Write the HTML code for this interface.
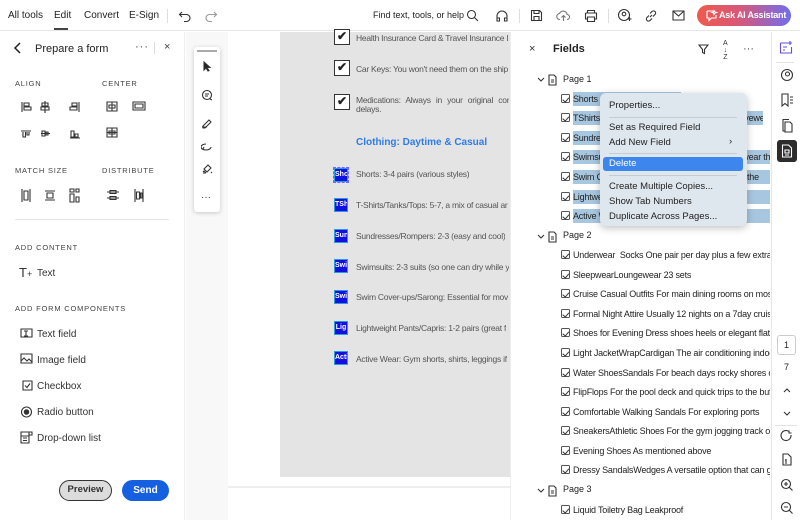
<!DOCTYPE html>
<html><head><meta charset="utf-8"><style>
*{box-sizing:border-box;margin:0;padding:0}
body{width:800px;height:520px;overflow:hidden;font-family:"Liberation Sans",sans-serif;color:#222;background:#fff;position:relative;font-size:11px}
.a{position:absolute}
svg{position:absolute;fill:none;stroke:#333;stroke-width:1.1}
.top{left:0;top:0;width:800px;height:31px;border-bottom:1px solid #e6e6e6;background:#fff}
.top span{position:absolute;top:10px;font-size:10px;color:#222;white-space:nowrap}
.sec{font-size:7.5px;letter-spacing:.8px;color:#444}
.item{font-size:10px;color:#333}
.doc{font-size:8.5px;color:#555;white-space:nowrap;letter-spacing:-0.25px;overflow:hidden;max-width:154px}
.fb{width:14px;height:14px;border:1.5px solid #2a9bd8;background:#1010e0;color:#fff;font-size:7px;line-height:11px;text-align:center;font-weight:bold;overflow:hidden}
.row{position:absolute;left:561px;font-size:9px;letter-spacing:-0.2px;color:#222;white-space:nowrap;overflow:hidden;width:209px;height:14px;line-height:14px}
.cb{display:inline-block;width:9px;height:9px;border:1px solid #555;border-radius:1.5px;vertical-align:-1px;margin-right:3px;position:relative}
.cb:after{content:"";position:absolute;left:2px;top:0.5px;width:2.5px;height:4.5px;border:solid #333;border-width:0 1.1px 1.1px 0;transform:rotate(40deg)}
.hl{background:#a7c6df;display:inline-block;overflow:hidden;vertical-align:top;height:14px}
.menu{left:600px;top:93px;width:147px;height:133px;background:#dfe7ee;border-radius:6px;box-shadow:0 2px 8px rgba(0,0,0,.25);font-size:9.5px;color:#222}
.menu div{position:absolute;left:9px;white-space:nowrap}
.sep{height:1px;background:#c5cdd4;left:9px!important;width:128px}
</style></head><body>
<div class="a top">
<span style="left:8px">All tools</span><span style="left:54px">Edit</span><span style="left:84px">Convert</span><span style="left:129px">E-Sign</span>
<div class="a" style="left:54px;top:28px;width:14px;height:2px;background:#444"></div>
<div class="a" style="left:167px;top:9px;width:1px;height:14px;background:#ddd"></div>
<svg style="left:178px;top:9px" width="14" height="14" viewBox="0 0 14 14"><path d="M4 3L1.5 5.5 4 8M1.5 5.5h7a3.5 3.5 0 010 7H6"/></svg>
<svg style="left:204px;top:9px;stroke:#999" width="14" height="14" viewBox="0 0 14 14"><path d="M10 3l2.5 2.5L10 8M12.5 5.5h-7a3.5 3.5 0 000 7H8"/></svg>
<span style="left:373px;font-size:9px">Find text, tools, or help</span>
<svg style="left:466px;top:9px" width="13" height="13" viewBox="0 0 13 13"><circle cx="5.5" cy="5.5" r="4"/><path d="M8.5 8.5l3.5 3.5"/></svg>
<svg style="left:495px;top:9px" width="14" height="14" viewBox="0 0 14 14"><path d="M2 9V7a5 5 0 0110 0v2M2 9h2.5v3H2zM9.5 9H12v3H9.5z"/></svg>
<div class="a" style="left:519px;top:9px;width:1px;height:14px;background:#ddd"></div>
<svg style="left:530px;top:9px" width="13" height="13" viewBox="0 0 13 13"><path d="M1.5 1.5h8l2 2v8h-10zM4 1.5v3h5v-3M4 11.5v-4h5v4"/></svg>
<svg style="left:556px;top:8px;stroke:#777" width="15" height="15" viewBox="0 0 15 15"><path d="M4 11.5a3 3 0 01-.5-6 4 4 0 017.6 1A2.5 2.5 0 0111 11.5M7.5 13V7.5M5.5 9.5l2-2 2 2"/></svg>
<svg style="left:584px;top:9px" width="14" height="14" viewBox="0 0 14 14"><path d="M3.5 4V1.5h7V4M1.5 4h11v6h-2M3.5 10h-2V4M3.5 8h7v4.5h-7z"/></svg>
<div class="a" style="left:608px;top:9px;width:1px;height:14px;background:#ddd"></div>
<svg style="left:617px;top:8px" width="15" height="15" viewBox="0 0 15 15"><circle cx="7" cy="7" r="5.5"/><circle cx="7" cy="6" r="1.8"/><path d="M10.5 11h4M12.5 9v4"/></svg>
<svg style="left:644px;top:9px" width="14" height="14" viewBox="0 0 14 14"><path d="M6 8l2-2M5 6.5L3 8.5a2 2 0 003 3L8 9.5M9 7.5l2-2a2 2 0 00-3-3L6 4.5"/></svg>
<svg style="left:672px;top:10px" width="13" height="11" viewBox="0 0 13 11"><path d="M1 1h11v9H1zM1 1l5.5 5L12 1"/></svg>
<div class="a" style="left:697px;top:5px;width:94px;height:21px;border-radius:11px;background:linear-gradient(90deg,#ef5a4d,#d85878 45%,#6e6ef0);color:#fff;font-weight:bold;font-size:9px;line-height:21px;padding-left:22px;white-space:nowrap;letter-spacing:-0.2px">Ask AI Assistant</div>
<svg style="left:705px;top:9px;stroke:#fff" width="13" height="13" viewBox="0 0 13 13"><path d="M2 2h6M2 2v7h2v2.5L6.5 9H11V6M9 1.5l1 1.5 1.5.5-1.5.5L9 5.5 8.5 4 7 3.5 8.5 3z"/></svg>
</div>

<div class="a" style="left:0;top:32px;width:185px;height:488px;background:#fff;border-right:1px solid #eee"></div>
<svg style="left:13px;top:42px" width="10" height="12" viewBox="0 0 10 12"><path d="M7 1L2 6l5 5" stroke-width="1.5" stroke="#222"/></svg>
<div class="a" style="left:35px;top:43px;font-size:11px;color:#222">Prepare a form</div>
<div class="a" style="left:135px;top:41px;font-size:11px;color:#444;letter-spacing:1px">···</div>
<div class="a" style="left:154px;top:42px;width:1px;height:12px;background:#ddd"></div>
<div class="a" style="left:164px;top:41px;font-size:11px;color:#444">×</div>
<div class="a sec" style="left:15px;top:79px">ALIGN</div>
<div class="a sec" style="left:102px;top:79px">CENTER</div>
<svg style="left:20px;top:100px" width="64" height="40" viewBox="0 0 64 40" stroke-width="1"><path d="M2 2v10M4 3h5v3H4zM4 7h7v3H4zM25 1v12M22 3h6v3h-6zM21 7h8v3h-8zM59 2v10M52 3h5v3h-5zM50 7h7v3h-7zM1 31h10M3 32v5h2.5v-5M7 32v3h2v-3M21 33.5h9M22 31h3v5h-3zM26 32h2v3h-2zM50 38h10M51 31h3v6h-3zM55 34h3v3h-3z"/></svg>
<svg style="left:106px;top:101px" width="45" height="40" viewBox="0 0 45 40" stroke-width="1"><path d="M1 1h10v9H1zM3 4h6v3H3zM6 1v9M27 1h12v8H27zM29 3h8v4h-8zM1 27h10v9H1zM3 30h6v3H3zM6 27v9M1 31.5h10"/></svg>
<div class="a sec" style="left:15px;top:166px">MATCH SIZE</div>
<div class="a sec" style="left:102px;top:166px">DISTRIBUTE</div>
<svg style="left:20px;top:188px" width="64" height="16" viewBox="0 0 64 16" stroke-width="1"><path d="M2 1v13M10 1v13M4 3h4v9H4zM25 3h10M25 12h10M27 5h6v5h-6zM50 1h4v3h-4zM56 1h3v3h-3zM50 6h4v8h-4zM56 9h3v5h-3z"/></svg>
<svg style="left:106px;top:188px" width="40" height="16" viewBox="0 0 40 16" stroke-width="1"><path d="M1 4h12M1 10h12M4 2.5h6v3H4zM4 8.5h6v3H4zM29 1v13M37 1v13M30.5 4h3v7h-3zM34.5 5h1.5v5h-1.5z"/></svg>
<div class="a" style="left:15px;top:219px;width:154px;height:1px;background:#e5e5e5"></div>
<div class="a sec" style="left:15px;top:243px">ADD CONTENT</div>
<div class="a item" style="left:19px;top:265px;font-size:13px">T<span style="font-size:9px">+</span></div>
<div class="a item" style="left:37px;top:268px">Text</div>
<div class="a sec" style="left:15px;top:304px">ADD FORM COMPONENTS</div>
<svg style="left:20px;top:328px" width="13" height="130" viewBox="0 0 13 130" stroke-width="1"><path d="M1 1h11v8H1zM4 3h4M6 3v5M4 8h4M1 26h11v9H1zM1 33l3-3 3 3 2-2 3 3M3 53h9v9H3zM5 57.5l2 2 3-4"/><circle cx="6.5" cy="84" r="5"/><circle cx="6.5" cy="84" r="2.2" fill="#333"/><path d="M1 104h8v4H1zM1 108h8v7H1zM9 104h3v3h-3zM3 110h4M3 112.5h4"/></svg>
<div class="a item" style="left:37px;top:329px">Text field</div>
<div class="a item" style="left:37px;top:355px">Image field</div>
<div class="a item" style="left:37px;top:381px">Checkbox</div>
<div class="a item" style="left:37px;top:407px">Radio button</div>
<div class="a item" style="left:37px;top:433px">Drop-down list</div>
<div class="a" style="left:59px;top:480px;width:53px;height:21px;border:1.5px solid #333;border-radius:11px;background:#dcdcdc;font-size:9.5px;font-weight:bold;color:#333;text-align:center;line-height:18px">Preview</div>
<div class="a" style="left:122px;top:480px;width:47px;height:21px;border-radius:11px;background:#1560e0;font-size:10px;font-weight:bold;color:#fff;text-align:center;line-height:21px">Send</div>

<div class="a" style="left:186px;top:32px;width:42px;height:488px;background:#f8f8f8"></div>
<div class="a" style="left:228px;top:32px;width:282px;height:488px;background:#fff"></div>
<div class="a" style="left:280px;top:32px;width:230px;height:445px;background:#e4e4e4"></div>
<div class="a" style="left:228px;top:486px;width:282px;height:2px;background:#eee"></div>
<div class="a" style="left:514px;top:262px;width:2px;height:28px;background:#bbb;border-radius:1px"></div>
<div class="a" style="left:194px;top:47px;width:26px;height:165px;background:#fff;border-radius:3px;box-shadow:0 1px 5px rgba(0,0,0,.2)"></div>
<div class="a" style="left:197px;top:50px;width:20px;height:2px;background:#aaa"></div>
<svg style="left:201px;top:61px" width="12" height="132" viewBox="0 0 12 132" stroke-width="1"><path d="M3 1v8l2-2 2 3 1-.5-2-3h3z" fill="#222"/><circle cx="6" cy="34" r="4.5"/><path d="M4 33h4M4 35h3M9 38l2 1M2 65l6-6 2 2-6 6H2zM1 66h5M5 83a5 3 0 105 3M3 86l-1 2M3 108l4-4 3 3-4 4zM2 111l1-1 2 2M10 111l1 1M2 112h3"/></svg>
<div class="a" style="left:201px;top:192px;font-size:10px;color:#333">···</div>

<div class="a" style="left:334px;top:29px;width:16px;height:16px;border:1.5px solid #333;background:#fff;font-size:12px;line-height:12px;text-align:center;font-weight:bold">✔</div>
<div class="a doc" style="left:356px;top:33px">Health Insurance Card &amp; Travel Insurance I</div>
<div class="a" style="left:334px;top:60px;width:16px;height:16px;border:1.5px solid #333;background:#fff;font-size:12px;line-height:12px;text-align:center;font-weight:bold">✔</div>
<div class="a doc" style="left:356px;top:64px">Car Keys: You won't need them on the ship</div>
<div class="a" style="left:334px;top:94px;width:16px;height:16px;border:1.5px solid #333;background:#fff;font-size:12px;line-height:12px;text-align:center;font-weight:bold">✔</div>
<div class="a doc" style="left:356px;top:95px;word-spacing:3px">Medications: Always in your original cor</div>
<div class="a doc" style="left:356px;top:104px">delays.</div>
<div class="a" style="left:356px;top:137px;font-size:10px;font-weight:bold;color:#2f7ce8">Clothing: Daytime &amp; Casual</div>
<div class="a fb" style="left:334px;top:168px;outline:1px dashed #6b6bff">Sho</div>
<div class="a doc" style="left:356px;top:169px">Shorts: 3-4 pairs (various styles)</div>
<div class="a fb" style="left:334px;top:198px">TSh</div><div class="a doc" style="left:356px;top:200px">T-Shirts/Tanks/Tops: 5-7, a mix of casual ar</div>
<div class="a fb" style="left:334px;top:229px">Sun</div><div class="a doc" style="left:356px;top:231px">Sundresses/Rompers: 2-3 (easy and cool)</div>
<div class="a fb" style="left:334px;top:259px">Swi</div><div class="a doc" style="left:356px;top:262px">Swimsuits: 2-3 suits (so one can dry while y</div>
<div class="a fb" style="left:334px;top:290px">Swi</div><div class="a doc" style="left:356px;top:292px">Swim Cover-ups/Sarong: Essential for mov</div>
<div class="a fb" style="left:334px;top:321px">Lig</div><div class="a doc" style="left:356px;top:323px">Lightweight Pants/Capris: 1-2 pairs (great f</div>
<div class="a fb" style="left:334px;top:351px">Acti</div><div class="a doc" style="left:356px;top:354px">Active Wear: Gym shorts, shirts, leggings if</div>

<div class="a" style="left:510px;top:32px;width:261px;height:488px;background:#fff;border-left:1px solid #eee"></div>
<div class="a" style="left:529px;top:43px;font-size:11px;color:#333">×</div>
<div class="a" style="left:553px;top:43px;font-size:11px;font-weight:bold;color:#222">Fields</div>
<svg style="left:698px;top:44px" width="11" height="11" viewBox="0 0 11 11"><path d="M1 1h9L6.5 5.5v4l-2-1v-3z"/></svg>
<div class="a" style="left:723px;top:40px;font-size:7px;line-height:7px;color:#333;text-align:center">A<br>↓<br>Z</div>
<div class="a" style="left:743px;top:43px;font-size:11px;color:#444">···</div>

<svg style="left:537px;top:74px" width="20" height="12" viewBox="0 0 20 12" stroke-width="1"><path d="M1 4l3 3 3-3M12 1h5l2 2v8h-7zM14 6h3M14 8h3"/></svg>
<div class="a" style="left:563px;top:74px;font-size:9px">Page 1</div>
<div class="row" style="top:92px"><span class="cb"></span><span class="hl" style="width:108px">Shorts 3</span></div>
<div class="row" style="top:111px"><span class="cb"></span><span class="hl" style="width:190px">TShirtsTanksTops 57 a mix of casual and activewear</span></div>
<div class="row" style="top:131px"><span class="cb"></span><span class="hl" style="width:100px">Sundresses</span></div>
<div class="row" style="top:150px"><span class="cb"></span><span class="hl" style="width:197px">Swimsuits 23 suits so one can dry while you wear the</span></div>
<div class="row" style="top:170px"><span class="cb"></span><span class="hl" style="width:197px">Swim Cover-ups Essential for moving around the</span></div>
<div class="row" style="top:190px"><span class="cb"></span><span class="hl" style="width:197px">Lightweight Pants Capris great to protect</span></div>
<div class="row" style="top:209px"><span class="cb"></span><span class="hl" style="width:197px">Active Wear Gym shorts if you plan to</span></div>
<svg style="left:537px;top:231px" width="20" height="12" viewBox="0 0 20 12" stroke-width="1"><path d="M1 4l3 3 3-3M12 1h5l2 2v8h-7zM14 6h3M14 8h3"/></svg>
<div class="a" style="left:563px;top:230px;font-size:9px">Page 2</div>
<div class="row" style="top:248px"><span class="cb"></span>Underwear&nbsp; Socks One pair per day plus a few extras</div>
<div class="row" style="top:268px"><span class="cb"></span>SleepwearLoungewear 23 sets</div>
<div class="row" style="top:287px"><span class="cb"></span>Cruise Casual Outfits For main dining rooms on most</div>
<div class="row" style="top:307px"><span class="cb"></span>Formal Night Attire Usually 12 nights on a 7day cruise</div>
<div class="row" style="top:326px"><span class="cb"></span>Shoes for Evening Dress shoes heels or elegant flats to</div>
<div class="row" style="top:346px"><span class="cb"></span>Light JacketWrapCardigan The air conditioning indoor</div>
<div class="row" style="top:366px"><span class="cb"></span>Water ShoesSandals For beach days rocky shores or k</div>
<div class="row" style="top:385px"><span class="cb"></span>FlipFlops For the pool deck and quick trips to the buff</div>
<div class="row" style="top:405px"><span class="cb"></span>Comfortable Walking Sandals For exploring ports</div>
<div class="row" style="top:424px"><span class="cb"></span>SneakersAthletic Shoes For the gym jogging track or a</div>
<div class="row" style="top:444px"><span class="cb"></span>Evening Shoes As mentioned above</div>
<div class="row" style="top:463px"><span class="cb"></span>Dressy SandalsWedges A versatile option that can go</div>
<svg style="left:537px;top:485px" width="20" height="12" viewBox="0 0 20 12" stroke-width="1"><path d="M1 4l3 3 3-3M12 1h5l2 2v8h-7zM14 6h3M14 8h3"/></svg>
<div class="a" style="left:563px;top:484px;font-size:9px">Page 3</div>
<div class="row" style="top:503px"><span class="cb"></span>Liquid Toiletry Bag Leakproof</div>

<div class="a menu">
<div style="top:7px">Properties...</div>
<div class="sep" style="top:24px"></div>
<div style="top:29px">Set as Required Field</div>
<div style="top:44px">Add New Field</div><div style="left:129px!important;top:43px">›</div>
<div class="sep" style="top:60px"></div>
<div style="left:3px!important;top:64px;width:140px;height:14px;background:#3d86ee;border-radius:3px;color:#fff;padding-left:6px;line-height:14px">Delete</div>
<div class="sep" style="top:82px"></div>
<div style="top:88px">Create Multiple Copies...</div>
<div style="top:103px">Show Tab Numbers</div>
<div style="top:118px">Duplicate Across Pages...</div>
</div>

<div class="a" style="left:771px;top:32px;width:1px;height:488px;background:#e6e6e6"></div>
<svg style="left:779px;top:40px;stroke:#5a4fe0" width="15" height="15" viewBox="0 0 15 15"><path d="M1.5 3h8M1.5 3v10h11V7M4 7h4M4 10h2M11 1v4M9 3h4"/></svg>
<div class="a" style="left:776px;top:62px;width:18px;height:1px;background:#e3e3e3"></div>
<svg style="left:780px;top:68px" width="14" height="14" viewBox="0 0 14 14"><circle cx="7" cy="7" r="5.5"/><circle cx="7.5" cy="6" r="2"/></svg>
<svg style="left:780px;top:93px" width="14" height="14" viewBox="0 0 14 14"><path d="M2 1h6v12L5 10.5 2 13zM10 4h3M10 7h3M10 10h3"/></svg>
<svg style="left:780px;top:118px" width="14" height="15" viewBox="0 0 14 15"><path d="M3 4V1.5h6M5 4h5l2 2v8H5zM3 4v9h2"/></svg>
<div class="a" style="left:777px;top:140px;width:20px;height:22px;background:#2c2c2c;border-radius:3px"></div>
<svg style="left:781px;top:144px;stroke:#fff" width="12" height="14" viewBox="0 0 12 14"><path d="M1.5 1h6l3 3v9h-9zM4 6h4v3H4zM4 11h4"/></svg>
<div class="a" style="left:777px;top:335px;width:19px;height:20px;border:1px solid #ccc;border-radius:3px;font-size:9px;text-align:center;line-height:18px">1</div>
<div class="a" style="left:784px;top:362px;font-size:9px">7</div>
<svg style="left:782px;top:387px" width="10" height="60" viewBox="0 0 10 60" stroke-width="1.2"><path d="M2 5l3-3 3 3M2 25l3 3 3-3"/></svg>
<div class="a" style="left:775px;top:425px;width:22px;height:1px;background:#e3e3e3"></div>
<svg style="left:780px;top:430px" width="14" height="85" viewBox="0 0 14 85"><path d="M11 5a5 5 0 11-2-3.5M9 0.5v2.5h2.5M3 24h5l3 3v8H3zM5 30h1M6 29v5"/><circle cx="6" cy="54" r="4.5"/><path d="M9 57l3.5 3.5M4 54h4M6 52v4"/><circle cx="6" cy="77" r="4.5"/><path d="M9 80l3.5 3.5M4 77h4"/></svg>
</body></html>
